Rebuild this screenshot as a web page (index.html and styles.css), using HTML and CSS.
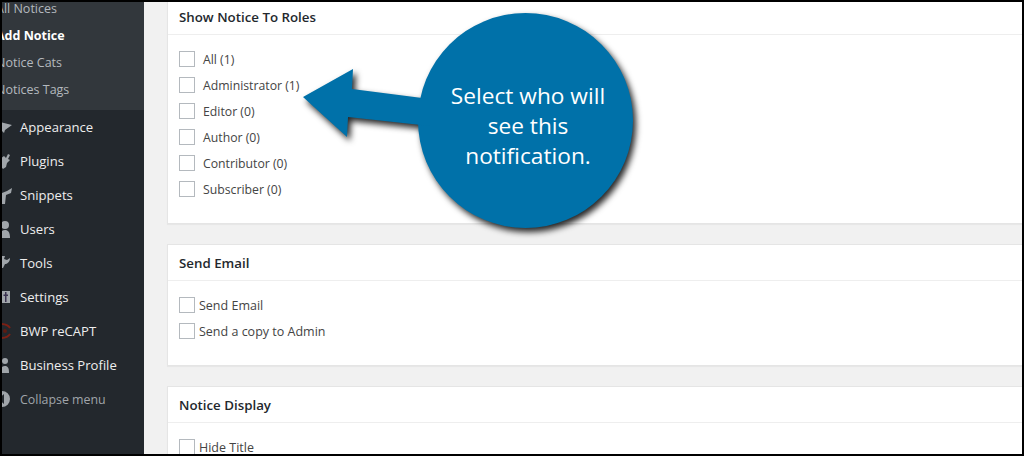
FILE: index.html
```html
<!DOCTYPE html>
<html lang="en">
<head>
    <meta charset="UTF-8">
    <title>Add Notice</title>
    <link rel="stylesheet" href="styles.css">
</head>
<body>
    <div class="frame">
        <div class="sidebar">
            <ul class="submenu">
                <li>All Notices</li>
                <li class="current">Add Notice</li>
                <li>Notice Cats</li>
                <li>Notices Tags</li>
            </ul>
            <ul class="menu">
                <li>
                    <svg class="icon" viewBox="0 0 20 20"><path d="M8 5l12 3-7 5-1 3-4-4z"/></svg>
                    Appearance
                </li>
                <li>
                    <svg class="icon" viewBox="0 0 20 20"><path d="M8 8l4-3 2 2 2-4 2 1-2 4 2 1-3 3-1 4-3 2-3-4z"/></svg>
                    Plugins
                </li>
                <li>
                    <svg class="icon" viewBox="0 0 20 20"><path d="M20 3l-1 5-5 2-1 9h-3V8l5-2z"/></svg>
                    Snippets
                </li>
                <li>
                    <svg class="icon" viewBox="0 0 20 20"><circle cx="13" cy="6" r="4"/><path d="M8 19c0-6 2-8 5-8s5 2 5 8z"/></svg>
                    Users
                </li>
                <li>
                    <svg class="icon" viewBox="0 0 20 20"><path d="M18 5c0 4-3 6-5 6l-2 4H8V3h5l-1 3 3 1z"/></svg>
                    Tools
                </li>
                <li>
                    <svg class="icon" viewBox="0 0 20 20"><path d="M8 4h10v12H8z"/><path class="cut" d="M13 5h1.500v2.500H16V9h-1.500v6H13V9h-1.500V7.500H13z"/></svg>
                    Settings
                </li>
                <li>
                    <svg class="icon icon-red" viewBox="0 0 20 20"><path d="M9 3c4 0 7 1 9 4M9 17c4 0 7-1 9-4" fill="none"/><circle class="dot" cx="13" cy="10" r="2"/></svg>
                    BWP reCAPT
                </li>
                <li>
                    <svg class="icon" viewBox="0 0 20 20"><circle cx="13" cy="6" r="3"/><path d="M8 18c0-5 2-7 5-7s4 2 4 7z"/></svg>
                    Business Profile
                </li>
                <li class="collapse">
                    <svg class="icon" viewBox="0 0 20 20"><path d="M10 2a8 8 0 1 1 0 16 8 8 0 0 1 0-16zm2 3l-6 5 6 5z" fill-rule="evenodd"/></svg>
                    Collapse menu
                </li>
            </ul>
        </div>

        <div class="main">
            <div class="card card-first">
                <h2>Show Notice To Roles</h2>
                <div class="card-body roles">
                    <label><span class="check"></span>All (1)</label>
                    <label><span class="check"></span>Administrator (1)</label>
                    <label><span class="check"></span>Editor (0)</label>
                    <label><span class="check"></span>Author (0)</label>
                    <label><span class="check"></span>Contributor (0)</label>
                    <label><span class="check"></span>Subscriber (0)</label>
                </div>
            </div>
            <div class="card">
                <h2>Send Email</h2>
                <div class="card-body">
                    <label><span class="check"></span>Send Email</label>
                    <label><span class="check"></span>Send a copy to Admin</label>
                </div>
            </div>
            <div class="card">
                <h2>Notice Display</h2>
                <div class="card-body">
                    <label><span class="check"></span>Hide Title</label>
                </div>
            </div>
        </div>

        <div class="callout">
            <svg class="callout-shape" viewBox="0 0 360 240">
                <g>
                    <circle cx="235.500" cy="120.500" r="107.500"/>
                    <path d="M13 97L63 69 62 89 140 99 140 126 58 117 57 137z"/>
                </g>
            </svg>
            <p>Select who will<br>see this<br>notification.</p>
        </div>
    </div>
</body>
</html>
```

FILE: styles.css
```css
* {
    box-sizing: border-box;
}

body {
    margin: 0;
    font-family: "Open Sans", Arial, sans-serif;
    font-size: 12.5px;
    color: #444;
}

.frame {
    position: relative;
    display: flex;
    height: 456px;
    border: 2px solid #000;
    overflow: hidden;
    background-color: #f1f1f1;
}

.sidebar {
    width: 142px;
    flex-shrink: 0;
    background-color: #23282d;
    color: #eee;
    overflow: hidden;
}

ul {
    list-style: none;
    margin: 0;
    padding: 0;
}

.submenu {
    height: 108px;
    background-color: #32373c;
    color: #b4b9be;
    overflow: hidden;
}

.submenu li {
    height: 27px;
    line-height: 27px;
    margin-left: -6px;
    white-space: nowrap;
}

.submenu li:first-child {
    margin-top: -7px;
}

.submenu .current {
    color: #fff;
    font-weight: 700;
}

.menu li {
    display: flex;
    align-items: center;
    height: 34px;
    gap: 8px;
    margin-left: -10px;
    font-size: 13.1px;
    white-space: nowrap;
}

.menu .collapse {
    color: #a0a5aa;
    font-size: 12.4px;
}

.icon {
    width: 20px;
    height: 20px;
    flex-shrink: 0;
    fill: #a0a5aa;
}

.icon .cut {
    fill: #3a3350;
}

.icon-red {
    fill: #5e1c12;
    stroke: #7c2014;
    stroke-width: 2;
}

.icon-red .dot {
    stroke: none;
}

.main {
    flex: 1;
    min-width: 0;
    padding-left: 23px;
    overflow: hidden;
}

.card {
    margin-right: -4px;
    margin-bottom: 20px;
    background-color: #fff;
    border: 1px solid #e5e5e5;
    box-shadow: 0 1px 1px rgba(0, 0, 0, 0.04);
}

.card-first {
    margin-top: -4px;
}

.card h2 {
    height: 36px;
    margin: 0;
    padding: 0 11px;
    border-bottom: 1px solid #eee;
    color: #23282d;
    font-size: 13.3px;
    font-weight: 600;
    line-height: 36px;
}

.card-body {
    display: flex;
    flex-direction: column;
    gap: 10px;
    padding: 16px 11px 26px;
}

.card-body label {
    display: flex;
    align-items: center;
    gap: 4px;
    height: 16px;
}

.roles {
    font-size: 12.25px;
}

.roles label {
    gap: 8px;
}

.check {
    width: 16px;
    height: 16px;
    flex-shrink: 0;
    background-color: #fff;
    border: 1px solid #b4b9be;
}

.callout {
    position: absolute;
    left: 288px;
    top: -2px;
    width: 360px;
    height: 240px;
}

.callout-shape {
    display: block;
    width: 360px;
    height: 240px;
    fill: #0071a9;
    filter: drop-shadow(3px 4px 3px rgba(0, 0, 0, 0.85));
}

.callout p {
    position: absolute;
    left: 130px;
    top: 81px;
    width: 216px;
    margin: 0;
    color: #fff;
    font-size: 22.7px;
    line-height: 30px;
    text-align: center;
}
```
